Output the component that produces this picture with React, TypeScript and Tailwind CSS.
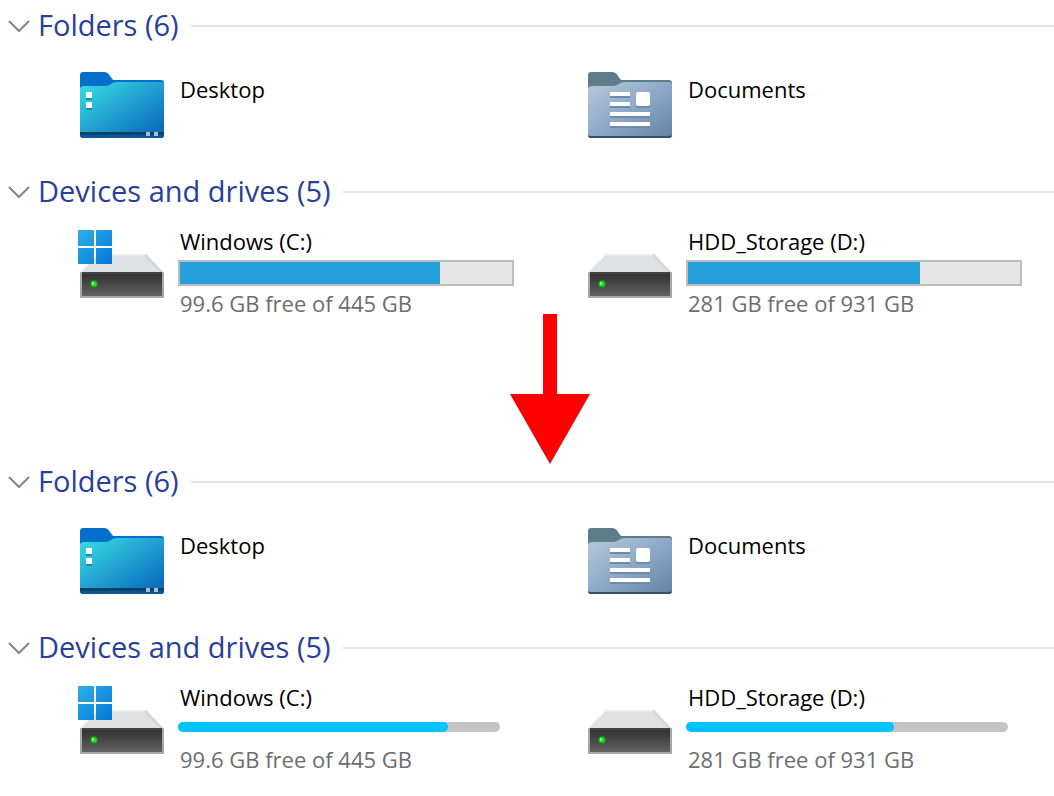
import React, { useId, useState } from "react";

type BarStyle = "classic" | "modern";

function DesktopFolderIcon() {
  const id = useId();
  return (
    <svg width="84" height="66" viewBox="0 0 84 66" aria-hidden="true">
      <defs>
        <linearGradient id={id} x1="0" y1="0" x2="1" y2="1">
          <stop offset="0" stopColor="#35dfe4" />
          <stop offset="0.5" stopColor="#219fd0" />
          <stop offset="1" stopColor="#0560b8" />
        </linearGradient>
      </defs>
      <path d="M0 3Q0 0 3 0H24Q28 0 30 4L33 8H81Q84 8 84 11V30H0Z" fill="#0570cc" />
      <path d="M0 16Q1 14 4 14H25Q29 14 31 12Q33 10 37 10H81Q84 10 84 13V63Q84 66 81 66H3Q0 66 0 63Z" fill={`url(#${id})`} />
      <path d="M0 60H84V62H0Z" fill="#07405f" />
      <path d="M0 62H84V63H0Z" fill="#0a4a70" />
      <path d="M0 63H84Q84 66 81 66H3Q0 66 0 63Z" fill="#0a57a0" />
      <path d="M6 26H12V28H6ZM6 36H12V38H6Z" fill="#168eaa" />
      <path d="M6 20H12V26H6ZM6 30H12V36H6Z" fill="#fff" />
      <path d="M66 60H70V64H66ZM74 60H78V64H74Z" fill="#a9bfd4" />
    </svg>
  );
}

function DocumentsFolderIcon() {
  const id = useId();
  return (
    <svg width="84" height="66" viewBox="0 0 84 66" aria-hidden="true">
      <defs>
        <linearGradient id={id} x1="0" y1="0" x2="1" y2="1">
          <stop offset="0" stopColor="#b9c8da" />
          <stop offset="0.5" stopColor="#8da9c8" />
          <stop offset="1" stopColor="#64829f" />
        </linearGradient>
      </defs>
      <path d="M0 3Q0 0 3 0H24Q28 0 30 4L33 8H81Q84 8 84 11V30H0Z" fill="#5d7d88" />
      <path d="M0 16Q1 14 4 14H25Q29 14 31 12Q33 10 37 10H81Q84 10 84 13V63Q84 66 81 66H3Q0 66 0 63Z" fill={`url(#${id})`} />
      <path d="M0 63Q1 64 3 64H81Q83 64 84 63Q84 66 81 66H3Q0 66 0 63Z" fill="#394e62" />
      <path d="M22 24H42V26H22ZM22 34H42V36H22ZM48 32H62V34Q62 36 60 36H50Q48 36 48 34ZM22 44H62V46H22ZM22 54H62V56H22Z" fill="#6e8aac" />
      <path d="M22 20H42V24H22ZM22 30H42V34H22ZM22 40H62V44H22ZM22 50H62V54H22Z" fill="#fff" />
      <rect x="48" y="20" width="14" height="14" rx="2" fill="#fff" />
    </svg>
  );
}

function DriveIcon({ system }: { system?: boolean }) {
  const id = useId();
  return (
    <svg width="86" height="68" viewBox="0 0 86 68" aria-hidden="true">
      <defs>
        <linearGradient id={`${id}b`} x1="0" y1="0" x2="0" y2="1">
          <stop offset="0" stopColor="#2d2d2d" />
          <stop offset="1" stopColor="#626262" />
        </linearGradient>
        <linearGradient id={`${id}w`} gradientUnits="userSpaceOnUse" x1="0" y1="0" x2="34" y2="34">
          <stop offset="0" stopColor="#2cb0ec" />
          <stop offset="1" stopColor="#0376d6" />
        </linearGradient>
      </defs>
      <path d="M20 24H68L85 42H3Z" fill="#e0e1e5" />
      <path d="M20 24H68L69 26H18Z" fill="#ececef" />
      <path d="M68 24L85 42H82L66 26Z" fill="#d4d5d7" />
      <rect x="2" y="42" width="84" height="26" fill="#a9a9a9" />
      <rect x="4" y="42" width="80" height="24" fill={`url(#${id}b)`} />
      <path d="M4 42H84V44H4Z" fill="#434343" />
      <circle cx="16" cy="54" r="4" fill="#158c1c" />
      <circle cx="16" cy="54" r="2.8" fill="#27d52c" />
      <rect x="14" y="52" width="2" height="3" fill="#84fa7b" />
      {system && (
        <path d="M0 0H16V16H0ZM18 0H34V16H18ZM0 18H16V34H0ZM18 18H34V34H18Z" fill={`url(#${id}w)`} />
      )}
    </svg>
  );
}

function Group({ title, gapClass, children }: { title: string; gapClass: string; children: React.ReactNode }) {
  const [open, setOpen] = useState(true);
  return (
    <section>
      <div className="flex h-9 items-center gap-3 pl-2">
        <h2 className="text-[29px] leading-8 font-normal text-[#28409a]">
          <button type="button" aria-expanded={open} onClick={() => setOpen(!open)} className="flex items-center gap-2 whitespace-nowrap">
            <svg width="22" height="12" viewBox="0 0 22 12" fill="none" aria-hidden="true" className={open ? "" : "-rotate-90"}>
              <path d="M1 1L11 11L21 1" stroke="#858585" strokeWidth="2" />
            </svg>
            <span className="pb-0.5">{title}</span>
          </button>
        </h2>
        <div className="h-0.5 flex-1 bg-[#e4e4e4]" />
      </div>
      {open && <ul className={`flex flex-wrap gap-x-16 pl-[78px] ${gapClass}`}>{children}</ul>}
    </section>
  );
}

function Folder({ name, icon }: { name: string; icon: React.ReactNode }) {
  return (
    <li className="flex w-[444px] gap-4 pl-0.5">
      {icon}
      <span className="pt-1.5 text-[22px] leading-[22px] text-black">{name}</span>
    </li>
  );
}

function UsageBar({ label, used, variant }: { label: string; used: number; variant: BarStyle }) {
  const classic = variant === "classic";
  return (
    <div
      role="progressbar"
      aria-label={label}
      aria-valuenow={Math.round(used)}
      aria-valuemin={0}
      aria-valuemax={100}
      className={
        classic
          ? "mt-2 mb-1.5 h-[26px] w-[336px] border-2 border-[#bcbcbc] bg-[#e6e6e6]"
          : "mt-[14px] mb-4 h-2.5 w-[322px] rounded-full bg-[#c4c4c4]"
      }
    >
      <div className={classic ? "h-full bg-[#26a0da]" : "h-full rounded-full bg-[#00c3ff]"} style={{ width: `${used}%` }} />
    </div>
  );
}

interface DriveProps {
  name: string;
  detail: string;
  used: number;
  variant: BarStyle;
  system?: boolean;
}

function Drive({ name, detail, used, variant, system }: DriveProps) {
  return (
    <li className="flex w-[444px] gap-[14px]">
      <DriveIcon system={system} />
      <div>
        <p className="pl-0.5 text-[22px] leading-[22px] text-black">{name}</p>
        <UsageBar label={name} used={used} variant={variant} />
        <p className="pl-0.5 text-[22px] leading-[22px] text-[#6d6d6d]">{detail}</p>
      </div>
    </li>
  );
}

function Explorer({ variant, usedC, usedD }: { variant: BarStyle; usedC: number; usedD: number }) {
  return (
    <div className="flex flex-col gap-9">
      <Group title="Folders (6)" gapClass="pt-7">
        <Folder name="Desktop" icon={<DesktopFolderIcon />} />
        <Folder name="Documents" icon={<DocumentsFolderIcon />} />
      </Group>
      <Group title="Devices and drives (5)" gapClass="pt-5">
        <Drive name="Windows (C:)" detail="99.6 GB free of 445 GB" used={usedC} variant={variant} system />
        <Drive name="HDD_Storage (D:)" detail="281 GB free of 931 GB" used={usedD} variant={variant} />
      </Group>
    </div>
  );
}

export default function App() {
  return (
    <main className="min-h-screen bg-white pt-2 font-['Open_Sans',sans-serif]">
      <Explorer variant="classic" usedC={78.3} usedD={69.9} />
      <div className="flex justify-center pl-[46px]">
        <svg width="80" height="150" viewBox="0 0 80 150" aria-hidden="true">
          <path d="M33 0H47V80H80L40 150L0 80H33Z" fill="#f00" />
        </svg>
      </div>
      <Explorer variant="modern" usedC={83.9} usedD={64.6} />
    </main>
  );
}
